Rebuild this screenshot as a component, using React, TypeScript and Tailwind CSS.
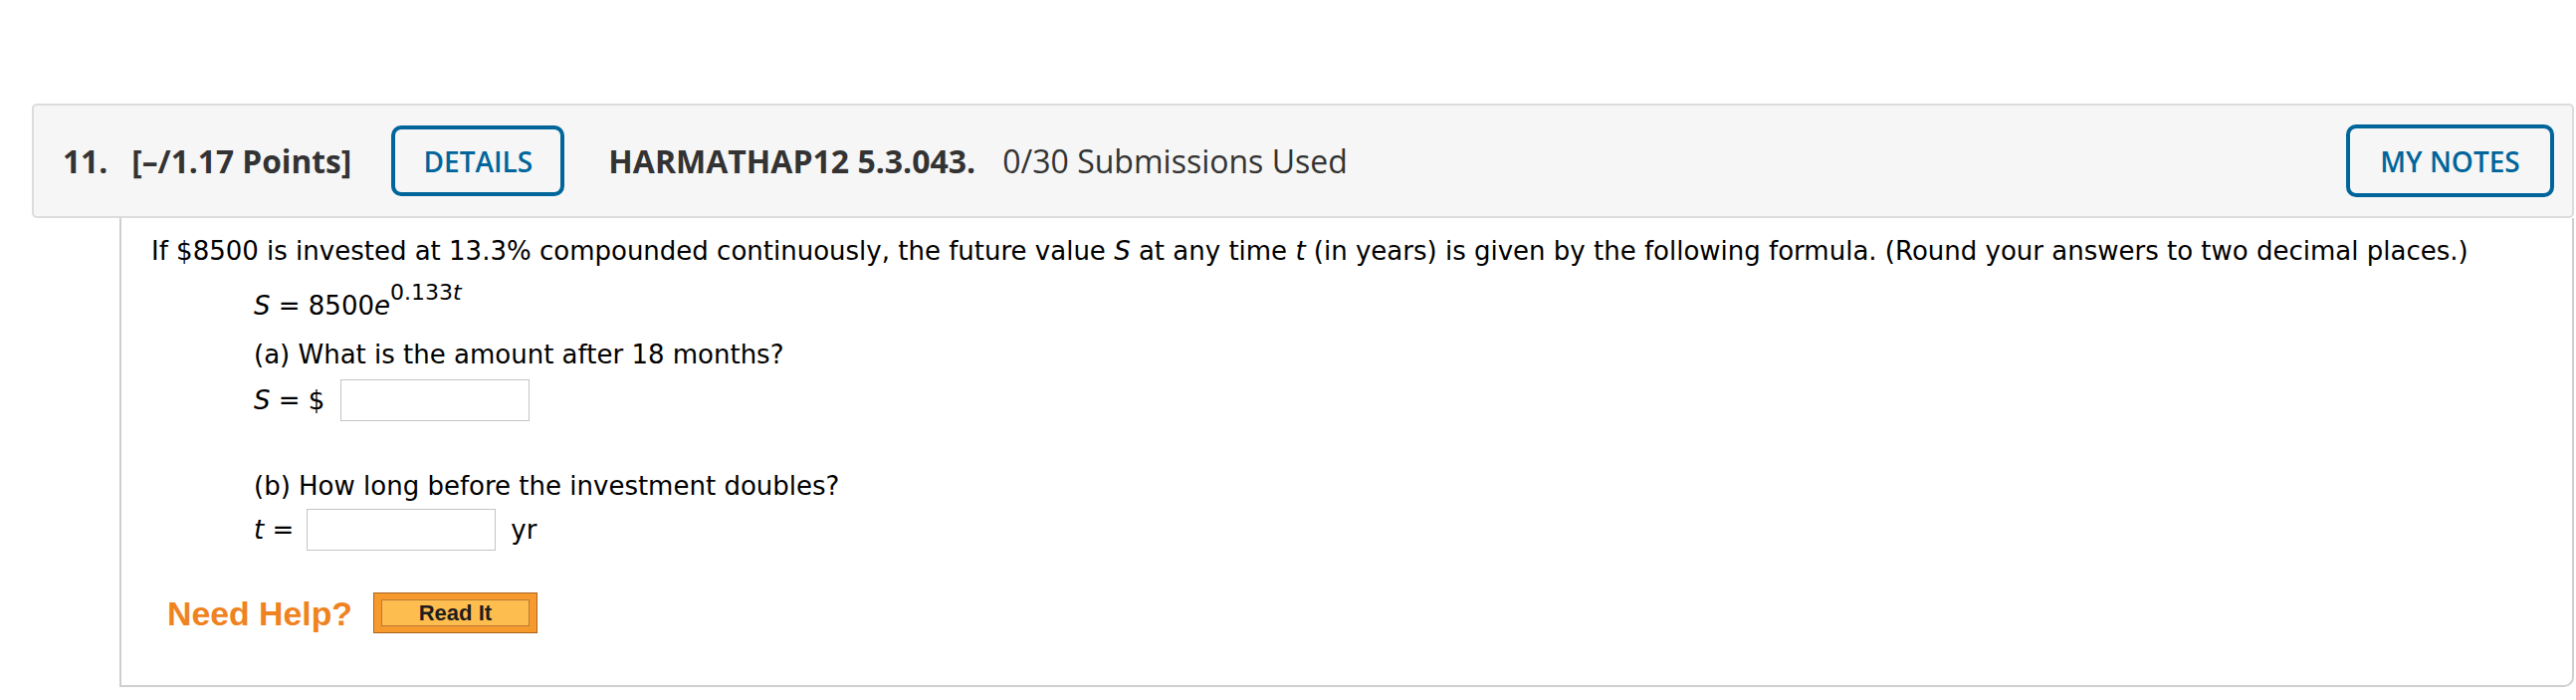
import React from "react";

const body = { fontFamily: '"DejaVu Sans", Verdana, sans-serif' } as const;

export default function App() {
  return (
    <div className="w-[2588px] h-[703px] bg-white pt-[104px] pl-[32px] pr-[2px]">
      {/* Header */}
      <div
        className="h-[115px] border-2 border-[#dcdcdc] bg-[#f6f6f6] rounded-[5px] flex items-center pl-[29px] pr-[18px] text-[#333333]"
        style={{ fontFamily: '"Open Sans", sans-serif' }}
      >
        <span className="text-[31.7px] font-bold">11.</span>
        <span className="text-[31.7px] font-bold ml-[24px]">[–/1.17 Points]</span>
        <button className="ml-[40px] h-[71px] w-[174px] border-[4px] border-[#00659b] rounded-[10px] text-[#00659b] text-[28px] font-semibold flex items-center justify-center">
          DETAILS
        </button>
        <span className="ml-[44px] text-[32px] font-bold">HARMATHAP12 5.3.043.</span>
        <span className="ml-[27px] text-[32px] font-normal">0/30 Submissions Used</span>
        <div className="flex-1" />
        <button className="h-[73px] w-[209px] border-[4px] border-[#00659b] rounded-[10px] text-[#00659b] text-[28px] font-semibold flex items-center justify-center">
          MY NOTES
        </button>
      </div>

      {/* Content */}
      <div
        className="ml-[88px] h-[471px] border-l-2 border-r-2 border-b-2 border-[#cfcfcf] rounded-br-[10px] pl-[30px] pt-[18px] text-black text-[26px]"
        style={body}
      >
        <div className="h-[30px] leading-[30px] whitespace-nowrap">
          If $8500 is invested at 13.3% compounded continuously, the future value <i>S</i> at any time <i>t</i> (in years) is given by the following formula. (Round your answers to two decimal places.)
        </div>
        <div className="ml-[103px] mt-[25px] h-[30px] leading-[30px] whitespace-nowrap">
          <i>S</i> = 8500<i>e</i>
          <span className="text-[22px] relative top-[-15px]">
            0.133<i>t</i>
          </span>
        </div>
        <div className="ml-[103px] mt-[19px] h-[30px] leading-[30px] whitespace-nowrap">
          (a) What is the amount after 18 months?
        </div>
        <div className="ml-[103px] mt-[10px] h-[42px] flex items-center whitespace-nowrap">
          <span className="leading-[30px]">
            <i>S</i> = $
          </span>
          <div className="ml-[16px] w-[190px] h-[42px] border border-[#c4c4c4] bg-white" />
        </div>
        <div className="ml-[103px] mt-[50px] h-[30px] leading-[30px] whitespace-nowrap">
          (b) How long before the investment doubles?
        </div>
        <div className="ml-[103px] mt-[8px] h-[42px] flex items-center whitespace-nowrap">
          <span className="leading-[30px]">
            <i>t</i> =
          </span>
          <div className="ml-[13px] w-[190px] h-[42px] border border-[#c4c4c4] bg-white" />
          <span className="ml-[15px] leading-[30px]">yr</span>
        </div>
        <div className="ml-[16px] mt-[42px] h-[41px] flex items-center">
          <span
            className="text-[33.8px] font-bold text-[#ef831f] leading-[36px]"
            style={{ fontFamily: '"Liberation Sans", Arial, sans-serif' }}
          >
            Need Help?
          </span>
          <div className="ml-[21px] w-[165px] h-[41px] border border-[#a9651f] bg-[#f79a2e] px-[7px] py-[6px]">
            <div
              className="w-full h-full border border-[#b97a35] bg-[#fdbd4f] flex items-center justify-center text-[22px] font-bold text-[#1d1d1d]"
              style={{ fontFamily: '"Liberation Sans", Arial, sans-serif' }}
            >
              Read It
            </div>
          </div>
        </div>
      </div>
    </div>
  );
}
